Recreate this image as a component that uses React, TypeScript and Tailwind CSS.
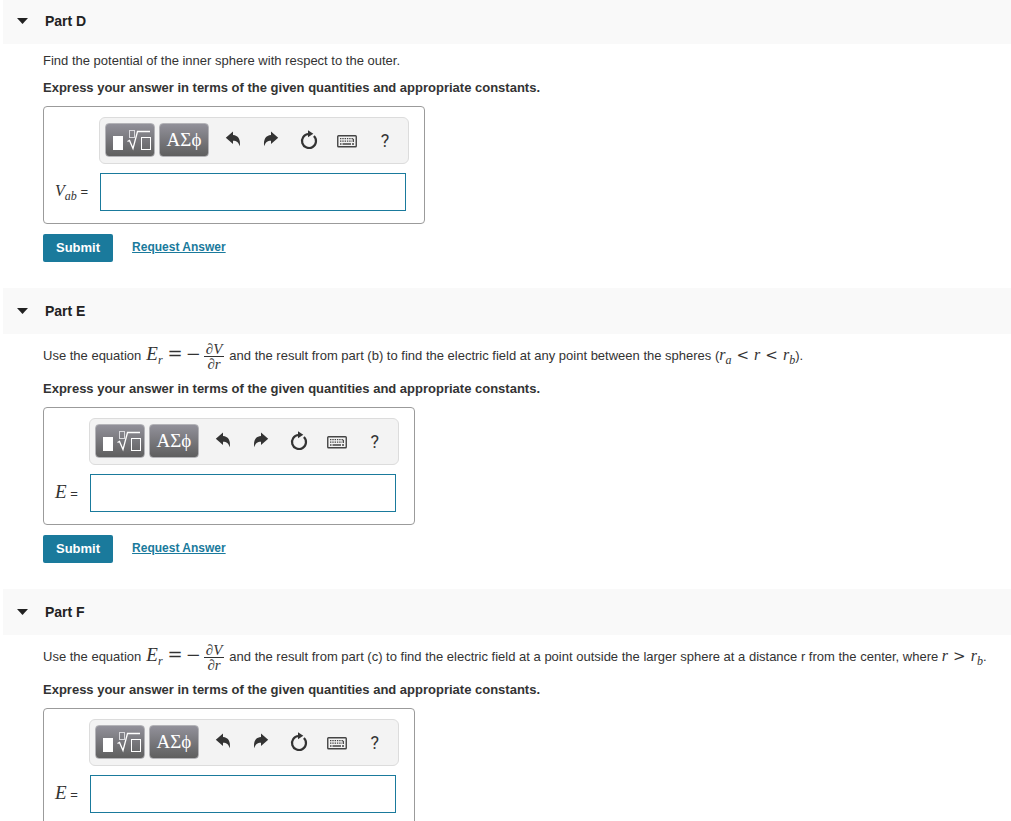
import { useState } from 'react';
import type { ReactNode } from 'react';

interface PartProps {
  id: string;
  title: string;
  question: ReactNode;
  label: ReactNode;
  hasActions?: boolean;
}

const Sub = ({ children }: { children: ReactNode }) => (
  <span className="relative top-1 text-[12px]">{children}</span>
);

const Var = ({ children }: { children: ReactNode }) => (
  <span className="font-['Liberation_Serif',serif] text-[16px] italic leading-none">{children}</span>
);

const BigVar = ({ children }: { children: ReactNode }) => (
  <span className="font-['Liberation_Serif',serif] text-[19px] italic leading-none">{children}</span>
);

const Op = ({ children }: { children: ReactNode }) => (
  <span className="mx-[5px] font-['DejaVu_Serif',serif] text-[15px] leading-none">{children}</span>
);

// E_r = -dV/dr
const FieldEquation = () => (
  <span className="mx-[5px] whitespace-nowrap">
    <BigVar>E</BigVar>
    <Var>
      <Sub>r</Sub>
    </Var>
    <span className="ml-[5px] font-['DejaVu_Serif',serif] text-[18px] leading-none">=</span>
    <span className="mx-[3px] font-['DejaVu_Serif',serif] text-[18px] leading-none">−</span>
    <span className="inline-flex flex-col text-center align-middle font-['Liberation_Serif',serif] text-[15px] italic leading-[14px]">
      <span className="border-b border-[#333] px-0.5">∂V</span>
      <span>∂r</span>
    </span>
  </span>
);

const TemplatesIcon = () => (
  <svg width="48" height="32" viewBox="0 0 48 32" fill="none" stroke="#fff" aria-hidden="true">
    <rect x="7" y="12" width="10" height="14" fill="#fff" stroke="none" />
    <rect x="23.5" y="6.5" width="5" height="7" stroke="#d8d8dc" />
    <path d="M21.500 17.500l2-1L27 24.500 31.500 7.500H44" strokeWidth="1.300" />
    <rect x="35.500" y="13.500" width="9" height="12" />
  </svg>
);

const UndoIcon = () => (
  <svg width="16" height="18" viewBox="0 0 16 18" fill="#333" aria-hidden="true">
    <path d="M.8 6.800L8 .5v3.400c5 .3 7.800 4.100 6.800 11.300C13.500 11.300 11.800 9.700 8 9.700v3.300z" />
  </svg>
);

const RedoIcon = () => (
  <svg width="16" height="18" viewBox="0 0 16 18" fill="#333" aria-hidden="true">
    <path d="M15.200 6.800L8 .5v3.400C3 4.200.2 8 1.200 15.200 2.500 11.300 4.200 9.700 8 9.700v3.300z" />
  </svg>
);

const ResetIcon = () => (
  <svg width="18" height="20" viewBox="0 0 18 20" fill="none" aria-hidden="true">
    <path d="M13.900 6A7 7 0 1 1 8.500 4" stroke="#333" strokeWidth="2.200" />
    <path d="M8 .3L13.300 3.800 8 7.300z" fill="#333" />
  </svg>
);

const KeyboardIcon = () => (
  <svg width="20" height="16" viewBox="0 -3 20 16" fill="none" stroke="#444" aria-hidden="true">
    <rect x=".75" y=".75" width="18.500" height="11" rx=".8" strokeWidth="1.400" />
    <path d="M3 3.700h14M3 6.200h12" strokeWidth="1.200" strokeDasharray="1.400 .9" />
    <path d="M3 9h1.500M5.500 9h8.500M15 9h2M16.300 4v3" strokeWidth="1.300" />
  </svg>
);

const toolButton = 'flex h-[34px] w-[38px] items-center justify-center';
const darkButton =
  'flex h-[34px] w-[50px] items-center justify-center rounded border border-[#b4b4b8] bg-linear-to-b from-[#92919a] to-[#5f5f5f] text-white';

const Toolbar = () => (
  <div className="flex h-[47px] items-start rounded-md border border-[#dcdcdc] bg-[#f3f3f3] pt-[5px] pr-1 pl-[5px]">
    <button type="button" aria-label="Templates" className={darkButton}>
      <TemplatesIcon />
    </button>
    <button
      type="button"
      className={`${darkButton} ml-1 pb-0.5 font-['Liberation_Serif',serif] text-[19px] leading-none`}
    >
      ΑΣϕ
    </button>
    <div className="ml-[5px] flex">
      <button type="button" aria-label="Undo" className={toolButton}>
        <UndoIcon />
      </button>
      <button type="button" aria-label="Redo" className={toolButton}>
        <RedoIcon />
      </button>
      <button type="button" aria-label="Reset" className={toolButton}>
        <ResetIcon />
      </button>
      <button type="button" aria-label="Keyboard shortcuts" className={toolButton}>
        <KeyboardIcon />
      </button>
      <button type="button" className={`${toolButton} font-[Roboto,sans-serif] text-[18px]`}>
        ?
      </button>
    </div>
  </div>
);

const Part = ({ id, title, question, label, hasActions = true }: PartProps) => {
  const [open, setOpen] = useState(true);
  const [answer, setAnswer] = useState('');

  return (
    <section>
      <h2 className="bg-[#f9f9f9]">
        <button
          type="button"
          aria-expanded={open}
          onClick={() => setOpen(!open)}
          className="flex h-[46px] w-full items-center gap-[17px] pl-3.5 text-[14px] font-bold text-[#222]"
        >
          <svg width="11" height="6" viewBox="0 0 11 6" fill="#222" aria-hidden="true">
            <path d="M0 0h11L5.500 6z" />
          </svg>
          {title}
        </button>
      </h2>
      {open && (
        <div className="flex flex-col items-start gap-[9px] pt-2 pr-4 pl-10">
          {question}
          <p className="font-bold leading-[18px]">
            Express your answer in terms of the given quantities and appropriate constants.
          </p>
          <div className="grid grid-cols-[auto_auto] items-center gap-x-[11px] gap-y-[9px] rounded border border-[#9b9b9b] pt-2.5 pr-[15px] pb-3 pl-[11px]">
            <div className="col-start-2">
              <Toolbar />
            </div>
            <label htmlFor={id} className="whitespace-nowrap">
              {label}
            </label>
            <input
              id={id}
              type="text"
              value={answer}
              onChange={(e) => setAnswer(e.target.value)}
              className="mr-[3px] ml-px h-[38px] border border-[#1a7a9c] bg-white px-2 text-[16px] outline-none"
            />
          </div>
          {hasActions && (
            <div className="flex items-start gap-[19px] pt-px pb-[26px]">
              <button
                type="button"
                className="h-7 rounded-xs bg-[#1a7a9c] px-[13px] text-[13px] font-bold text-white"
              >
                Submit
              </button>
              <a href="#" className="text-[12px] font-bold leading-[26px] text-[#1a7a9c] underline">
                Request Answer
              </a>
            </div>
          )}
        </div>
      )}
    </section>
  );
};

const App = () => (
  <main className="-mt-0.5 bg-white pl-[3px] font-['Liberation_Sans',Arial,sans-serif] text-[13px] text-[#333]">
    <Part
      id="part-d"
      title="Part D"
      question={
        <p className="leading-[18px]">Find the potential of the inner sphere with respect to the outer.</p>
      }
      label={
        <>
          <Var>
            V<Sub>ab</Sub>
          </Var>{' '}
          =
        </>
      }
    />
    <Part
      id="part-e"
      title="Part E"
      question={
        <p className="leading-7">
          Use the equation
          <FieldEquation />
          and the result from part (b) to find the electric field at any point between the spheres (
          <span className="whitespace-nowrap">
            <Var>
              r<Sub>a</Sub>
            </Var>
            <Op>&lt;</Op>
            <Var>r</Var>
            <Op>&lt;</Op>
            <Var>
              r<Sub>b</Sub>
            </Var>
          </span>
          ).
        </p>
      }
      label={
        <>
          <BigVar>E</BigVar> =
        </>
      }
    />
    <Part
      id="part-f"
      title="Part F"
      hasActions={false}
      question={
        <p className="leading-7">
          Use the equation
          <FieldEquation />
          and the result from part (c) to find the electric field at a point outside the larger sphere at a
          distance r from the center, where{' '}
          <span className="whitespace-nowrap">
            <Var>r</Var>
            <Op>&gt;</Op>
            <Var>
              r<Sub>b</Sub>
            </Var>
          </span>
          .
        </p>
      }
      label={
        <>
          <BigVar>E</BigVar> =
        </>
      }
    />
  </main>
);

export default App;
